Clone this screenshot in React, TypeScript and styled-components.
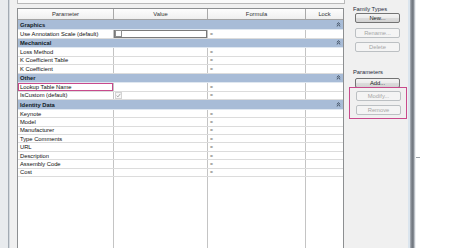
import React from 'react';
import styled, { createGlobalStyle } from 'styled-components';

const GlobalStyle = createGlobalStyle`
  html, body {
    margin: 0;
    padding: 0;
    width: 474px;
    height: 248px;
    overflow: hidden;
    background: #ffffff;
  }
  #root {
    height: 100%;
  }
  * {
    box-sizing: border-box;
  }
`;

const COLUMNS = '96px 94px 98px 37px';

type Row =
  | { kind: 'group'; label: string }
  | { kind: 'param'; label: string; value?: 'check' | 'checked'; highlight?: boolean };

const rows: Row[] = [
  { kind: 'group', label: 'Graphics' },
  { kind: 'param', label: 'Use Annotation Scale (default)', value: 'check' },
  { kind: 'group', label: 'Mechanical' },
  { kind: 'param', label: 'Loss Method' },
  { kind: 'param', label: 'K Coefficient Table' },
  { kind: 'param', label: 'K Coefficient' },
  { kind: 'group', label: 'Other' },
  { kind: 'param', label: 'Lookup Table Name', highlight: true },
  { kind: 'param', label: 'IsCustom (default)', value: 'checked' },
  { kind: 'group', label: 'Identity Data' },
  { kind: 'param', label: 'Keynote' },
  { kind: 'param', label: 'Model' },
  { kind: 'param', label: 'Manufacturer' },
  { kind: 'param', label: 'Type Comments' },
  { kind: 'param', label: 'URL' },
  { kind: 'param', label: 'Description' },
  { kind: 'param', label: 'Assembly Code' },
  { kind: 'param', label: 'Cost' },
];

const Screen = styled.div`
  display: flex;
  width: 474px;
  height: 248px;
  font-family: 'Liberation Sans', Arial, sans-serif;
  font-size: 5.8px;
  color: #0d0d0d;
`;

const LeftFrame = styled.div`
  width: 10px;
  flex-shrink: 0;
  background: linear-gradient(
    to right,
    #e8ebee 0,
    #e8ebee 8px,
    #a2aab3 8px,
    #a2aab3 9px,
    #d3d9df 9px
  );
`;

const Dialog = styled.div`
  display: flex;
  width: 398px;
  flex-shrink: 0;
  background: #f0f0f0;
`;

const GridColumn = styled.div`
  display: flex;
  flex-direction: column;
  width: 334px;
  padding-left: 7px;
`;

const TopField = styled.div`
  height: 4px;
  width: 328px;
  margin-bottom: 4px;
  background: #fafafa;
  border: 1px solid #b9b9b9;
  border-top: none;
`;

const Table = styled.div`
  flex: 1;
  display: flex;
  flex-direction: column;
  width: 327px;
  background: #ffffff;
  border: 1px solid #8d8f91;
  border-bottom: none;
`;

const HeaderRow = styled.div`
  display: grid;
  grid-template-columns: ${COLUMNS};
  height: 11.4px;
  flex-shrink: 0;
  background: linear-gradient(#fdfdfd, #efefef);
  border-bottom: 1px solid #a3a3a3;
`;

const HeaderCell = styled.div`
  display: flex;
  align-items: center;
  justify-content: center;
  color: #333333;
  border-right: 1px solid #a9a9a9;
  &:last-child {
    border-right: none;
  }
`;

const GroupRow = styled.div`
  display: flex;
  align-items: center;
  justify-content: space-between;
  height: 9.8px;
  flex-shrink: 0;
  padding: 0 2px 0 2px;
  background: #a8bcd7;
  border-bottom: 1px solid #dfe7f0;
  font-weight: bold;
  color: #111a26;
`;

const DataRow = styled.div`
  display: grid;
  grid-template-columns: ${COLUMNS};
  height: 8.4px;
  flex-shrink: 0;
  border-bottom: 1px solid #dcdcdc;
`;

const Cell = styled.div<{ $highlight?: boolean; $editing?: boolean }>`
  display: flex;
  align-items: center;
  padding-left: 2px;
  white-space: nowrap;
  overflow: hidden;
  border-right: 1px solid #c4c4c4;
  box-shadow: ${(p) =>
    p.$highlight
      ? 'inset 0 0 0 1px #c84a8c'
      : p.$editing
        ? 'inset 0 0 0 1px #7a7a7a'
        : 'none'};
  &:last-child {
    border-right: none;
  }
`;

const ValueCell = styled(Cell)`
  padding-left: 1px;
`;

const Equals = styled.span`
  color: #6a6a6a;
  font-size: 5px;
`;

const Filler = styled.div`
  flex: 1;
  display: grid;
  grid-template-columns: ${COLUMNS};
`;

const FillerCell = styled.div`
  border-right: 1px solid #c4c4c4;
  &:last-child {
    border-right: none;
  }
`;

const SidePanel = styled.div`
  display: flex;
  flex-direction: column;
  width: 64px;
  padding-left: 9px;
`;

const PanelLabel = styled.div<{ $top: number }>`
  height: 7px;
  line-height: 7px;
  margin-top: ${(p) => p.$top}px;
  color: #1e2b3a;
`;

const Button = styled.div<{ $disabled?: boolean; $gap?: number }>`
  display: flex;
  align-items: center;
  justify-content: center;
  width: 45px;
  height: 10px;
  margin-left: 2px;
  margin-top: ${(p) => p.$gap ?? 0}px;
  border-radius: 2px;
  border: 1px solid ${(p) => (p.$disabled ? '#bcc0c3' : '#737373')};
  background: ${(p) =>
    p.$disabled ? '#f4f4f4' : 'linear-gradient(#f3f3f3 0%, #ebebeb 50%, #dcdcdc 51%, #d2d2d2 100%)'};
  color: ${(p) => (p.$disabled ? '#a6a6a6' : '#1b1b1b')};
`;

const Callout = styled.div`
  width: 58px;
  margin: -1px 0 0 -4px;
  padding: 3px 0 3px 4px;
  border: 1px solid #c84a8c;
`;

const WindowEdge = styled.div`
  width: 8px;
  flex-shrink: 0;
  background: linear-gradient(
    to right,
    #dbe5ee 0,
    #dbe5ee 2px,
    #b7bdc5 2px,
    #8a9098 3px,
    #6c727a 5px,
    #9aa0a8 6px,
    #dfe3e7 7px,
    #ffffff 8px
  );
`;

const Desktop = styled.div`
  flex: 1;
  background: #ffffff;
`;

const Tick = styled.div`
  width: 4px;
  height: 1px;
  margin-top: 157px;
  background: #9aa0a6;
`;

const Checkbox: React.FC<{ checked?: boolean }> = ({ checked }) => (
  <svg width="7" height="7" viewBox="0 0 7 7">
    <rect
      x="0.5"
      y="0.5"
      width="6"
      height="6"
      fill={checked ? '#f7f7f7' : '#fdfdfd'}
      stroke={checked ? '#d4d4d4' : '#8e8f8f'}
    />
    {checked && (
      <path d="M1.6 3.6 L2.9 4.9 L5.4 1.8" fill="none" stroke="#a0a0a0" strokeWidth="0.9" />
    )}
  </svg>
);

const CollapseIcon: React.FC = () => (
  <svg width="5" height="5" viewBox="0 0 5 5">
    <path d="M0.8 2.4 L2.5 0.8 L4.2 2.4 M0.8 4.4 L2.5 2.8 L4.2 4.4" fill="none" stroke="#1f2c3c" strokeWidth="0.8" />
  </svg>
);

const App: React.FC = () => {
  return (
    <>
      <GlobalStyle />
      <Screen>
        <LeftFrame />
        <Dialog>
          <GridColumn>
            <TopField />
            <Table>
              <HeaderRow>
                <HeaderCell>Parameter</HeaderCell>
                <HeaderCell>Value</HeaderCell>
                <HeaderCell>Formula</HeaderCell>
                <HeaderCell>Lock</HeaderCell>
              </HeaderRow>
              {rows.map((row) =>
                row.kind === 'group' ? (
                  <GroupRow key={row.label}>
                    <span>{row.label}</span>
                    <CollapseIcon />
                  </GroupRow>
                ) : (
                  <DataRow key={row.label}>
                    <Cell $highlight={row.highlight}>{row.label}</Cell>
                    <ValueCell $editing={row.value === 'check'}>
                      {row.value === 'check' && <Checkbox />}
                      {row.value === 'checked' && <Checkbox checked />}
                    </ValueCell>
                    <Cell>
                      <Equals>=</Equals>
                    </Cell>
                    <Cell />
                  </DataRow>
                )
              )}
              <Filler>
                <FillerCell />
                <FillerCell />
                <FillerCell />
                <FillerCell />
              </Filler>
            </Table>
          </GridColumn>
          <SidePanel>
            <PanelLabel $top={6}>Family Types</PanelLabel>
            <Button>New...</Button>
            <Button $disabled $gap={5}>
              Rename...
            </Button>
            <Button $disabled $gap={4}>
              Delete
            </Button>
            <PanelLabel $top={16.5}>Parameters</PanelLabel>
            <Button $gap={2.5}>Add...</Button>
            <Callout>
              <Button $disabled>Modify...</Button>
              <Button $disabled $gap={4}>
                Remove
              </Button>
            </Callout>
          </SidePanel>
        </Dialog>
        <WindowEdge />
        <Desktop>
          <Tick />
        </Desktop>
      </Screen>
    </>
  );
};

export default App;
